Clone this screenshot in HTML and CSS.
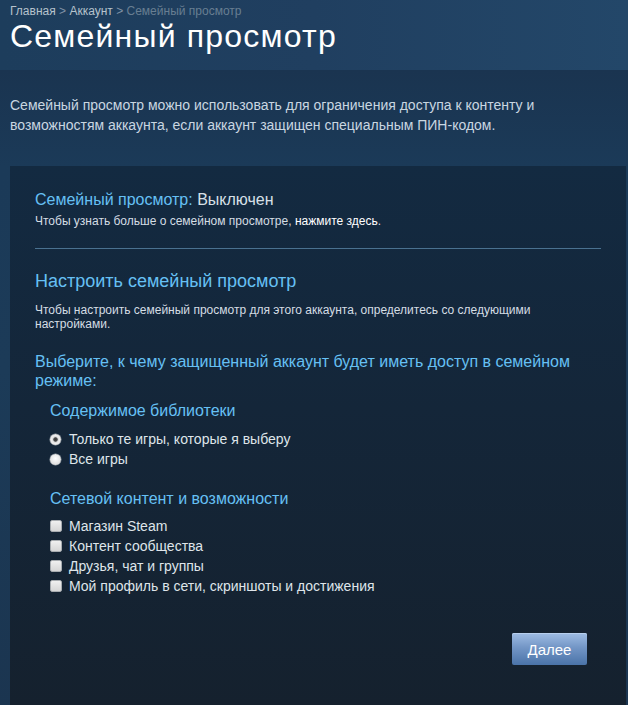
FILE: index.html
```html
<!DOCTYPE html>
<html lang="ru">
<head>
<meta charset="utf-8">
<title>Семейный просмотр</title>
<link rel="stylesheet" href="styles.css">
</head>
<body>
<div class="page">
  <header class="header">
    <div class="breadcrumbs">
      <a class="crumb">Главная</a> <span class="sep">&gt;</span> <a class="crumb">Аккаунт</a> <span class="sep">&gt;</span> <span class="crumb-current">Семейный просмотр</span>
    </div>
    <h1 class="title">Семейный просмотр</h1>
  </header>
  <div class="band">
    <p class="intro">Семейный просмотр можно использовать для ограничения доступа к контенту и возможностям аккаунта, если аккаунт защищен специальным ПИН-кодом.</p>
    <section class="panel">
      <div class="status"><span class="status-label">Семейный просмотр:</span> <span class="status-value">Выключен</span></div>
      <p class="small">Чтобы узнать больше о семейном просмотре, <a class="link">нажмите здесь</a>.</p>
      <hr class="divider">
      <h2 class="setup-title">Настроить семейный просмотр</h2>
      <p class="small setup-text">Чтобы настроить семейный просмотр для этого аккаунта, определитесь со следующими настройками.</p>
      <h3 class="question">Выберите, к чему защищенный аккаунт будет иметь доступ в семейном режиме:</h3>
      <div class="group">
        <h4 class="group-title">Содержимое библиотеки</h4>
        <ul class="options">
          <li class="option"><span class="radio checked"></span>Только те игры, которые я выберу</li>
          <li class="option"><span class="radio"></span>Все игры</li>
        </ul>
        <h4 class="group-title group-second">Сетевой контент и возможности</h4>
        <ul class="options">
          <li class="option"><span class="check"></span>Магазин Steam</li>
          <li class="option"><span class="check"></span>Контент сообщества</li>
          <li class="option"><span class="check"></span>Друзья, чат и группы</li>
          <li class="option"><span class="check"></span>Мой профиль в сети, скриншоты и достижения</li>
        </ul>
      </div>
      <div class="actions">
        <button class="btn">Далее</button>
      </div>
    </section>
  </div>
</div>
</body>
</html>
```

FILE: styles.css
```css
* { box-sizing: border-box; }
html, body { margin: 0; padding: 0; height: 100%; }
body {
  font-family: "Liberation Sans", Arial, sans-serif;
  background: #1b3854;
  color: #c6d4df;
  overflow: hidden;
}
.page { min-height: 100%; display: flex; flex-direction: column; }
.header {
  height: 70px;
  padding: 4px 10px 0;
  background: linear-gradient(to right, #1d3d5c 0%, #203f60 50%, #234769 100%);
}
.breadcrumbs {
  font-size: 12px;
  line-height: 14px;
  color: #8a9cae;
}
.crumb { color: #b6c2cc; }
.sep { color: #8193a6; }
.crumb-current { color: #687e92; }
.title {
  margin: 0;
  font-size: 32px;
  line-height: 36px;
  font-weight: normal;
  color: #ffffff;
  letter-spacing: 1.2px;
}
.band {
  flex: 1;
  display: flex;
  flex-direction: column;
  background: linear-gradient(to bottom, #1a3450 0px, #1b3a58 96px, #1c3b58 300px, #1b3550 640px);
}
.intro {
  margin: 25px 0 0;
  padding: 0 10px;
  font-size: 14px;
  line-height: 20px;
  color: #c9d6e1;
}
.panel {
  flex: 1;
  margin: 31px 2px 0 10px;
  padding: 24px 25px 0;
  background: linear-gradient(to bottom, #132a41 0%, #142639 45%, #15212e 100%);
}
.status { font-size: 16px; line-height: 20px; }
.status-label { color: #66c0f4; }
.status-value { color: #d7e0e8; }
.small {
  margin: 3px 0 0;
  font-size: 12px;
  line-height: 16px;
  color: #d5dde4;
}
.link { color: #ffffff; }
.divider {
  margin: 19px 0 0;
  border: 0;
  height: 1px;
  background: #4a7190;
}
.setup-title {
  margin: 21px 0 0;
  font-size: 18px;
  line-height: 22px;
  font-weight: normal;
  color: #66c0f4;
}
.setup-text { margin-top: 11px; line-height: 14px; }
.question {
  margin: 21px 0 0;
  font-size: 16px;
  line-height: 19px;
  font-weight: normal;
  color: #66c0f4;
}
.group { padding-left: 15px; }
.group-title {
  margin: 11px 0 0;
  font-size: 16px;
  line-height: 20px;
  font-weight: normal;
  color: #66c0f4;
}
.group-second { margin-top: 20px; }
.options {
  list-style: none;
  margin: 8px 0 0;
  padding: 0;
}
.group-second + .options { margin-top: 7px; }
.option {
  display: flex;
  align-items: center;
  font-size: 14px;
  line-height: 20px;
  color: #dfe5ea;
}
.radio {
  width: 11px;
  height: 11px;
  margin-right: 8px;
  border-radius: 50%;
  background: radial-gradient(circle at 50% 40%, #ffffff 0%, #e4e4e4 60%, #c8c8c8 100%);
  box-shadow: 0 0 0 0.5px #9aa3ab;
  flex: none;
}
.radio.checked {
  background: radial-gradient(circle, #3a3a3a 0, #4a4a4a 1.8px, #d8d8d8 2.6px, #eeeeee 4px, #c8c8c8 100%);
}
.check {
  width: 12px;
  height: 12px;
  margin-right: 7px;
  border-radius: 2px;
  background: linear-gradient(to bottom, #f0f0f0, #d6d6d6);
  border: 1px solid #a8acb0;
  flex: none;
}
.actions {
  display: flex;
  justify-content: flex-end;
  margin-top: 37px;
  padding-right: 14px;
}
.btn {
  width: 75px;
  height: 32px;
  border: 0;
  border-radius: 2px;
  padding: 0;
  font-family: "Liberation Sans", Arial, sans-serif;
  font-size: 15px;
  color: #ffffff;
  background: linear-gradient(to bottom, #9fbde4 0%, #7396c6 45%, #4a73a8 100%);
  box-shadow: inset 0 1px 0 #b7cfee;
}
```
